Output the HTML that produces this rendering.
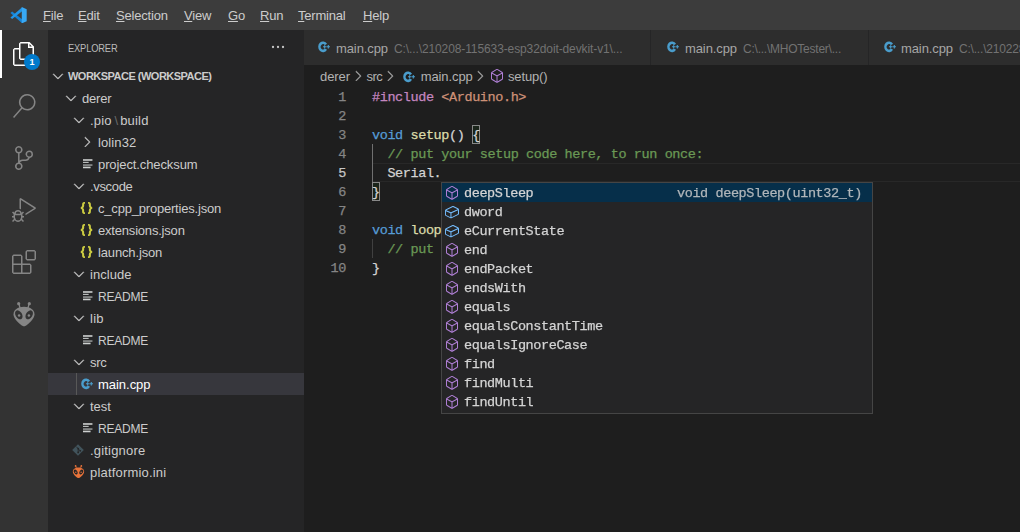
<!DOCTYPE html>
<html><head><meta charset="utf-8">
<style>
*{box-sizing:border-box;margin:0;padding:0}
html,body{width:1020px;height:532px;overflow:hidden;background:#1e1e1e}
body{font-family:"Liberation Sans",sans-serif;font-size:13px;color:#cccccc;position:relative}
.abs{position:absolute}
#menubar{left:0;top:0;width:1020px;height:30px;background:#3c3c3c}
#menubar .mi{position:absolute;top:1px;height:30px;line-height:30px;font-size:13px;color:#cccccc;white-space:nowrap;letter-spacing:-0.2px}
#menubar .mi u{text-decoration:underline;text-underline-offset:1px}
#activity{left:0;top:30px;width:48px;height:502px;background:#333333}
#sidebar{left:48px;top:30px;width:256px;height:502px;background:#252526}
#editor{left:304px;top:30px;width:716px;height:502px;background:#1e1e1e}
#tabs{left:0;top:0;width:716px;height:35px;background:#252526}
.tab{position:absolute;top:0;height:35px;background:#2d2d2d;border-right:1px solid #252526}
.tab .lbl{position:absolute;top:1px;line-height:35px;font-size:13px;color:#a6a6a6;white-space:nowrap;letter-spacing:-0.25px}
.tab .desc{position:absolute;top:2px;line-height:35px;font-size:12px;color:#727272;white-space:nowrap;letter-spacing:-0.25px}
.row{position:absolute;left:0;width:256px;height:22px;line-height:22px;white-space:nowrap;color:#cccccc;font-size:13px}
.row .t{position:absolute;top:0;letter-spacing:-0.25px}
.row svg{position:absolute}
.chev{position:absolute}
.row .t{top:1px}
.code{font-family:"Liberation Mono",monospace;font-size:13.5px;letter-spacing:-0.4px;white-space:pre;padding-top:1px;-webkit-text-stroke:0.25px}
.ln{position:absolute;left:0;width:42px;text-align:right;color:#858585;height:19px;line-height:19px}
.cl{position:absolute;left:68px;height:19px;line-height:19px;color:#d4d4d4}
</style></head><body>
<div id="menubar" class="abs">
<svg class="abs" style="left:9.5px;top:6.8px" width="17" height="16.4" viewBox="0 0 100 100"><path fill="#1683d6" d="M1 36 L11 27 L72 74 L72 99 Z"/><path fill="#2096e8" d="M1 64 L11 73 L72 26 L72 1 Z"/><path fill="#38a9f5" d="M70 0 L100 13 L100 87 L70 100 Z"/></svg>
<span class="mi" style="left:43px"><u>F</u>ile</span>
<span class="mi" style="left:78px"><u>E</u>dit</span>
<span class="mi" style="left:116px"><u>S</u>election</span>
<span class="mi" style="left:184px"><u>V</u>iew</span>
<span class="mi" style="left:228px"><u>G</u>o</span>
<span class="mi" style="left:260px"><u>R</u>un</span>
<span class="mi" style="left:298px"><u>T</u>erminal</span>
<span class="mi" style="left:363px"><u>H</u>elp</span>
</div>
<div id="activity" class="abs">
<div class="abs" style="left:0;top:0;width:2px;height:48px;background:#ffffff"></div>
<svg class="abs" style="left:12px;top:12px" width="24" height="24" viewBox="0 0 24 24"><path fill="#ffffff" d="M17.5 0h-9L7 1.5V6H2.5L1 7.5v15.07L2.5 24h12.07L16 22.57V18h4.7l1.3-1.43V4.5L17.5 0zm0 2.12l2.38 2.38H17.5V2.12zm-3 20.38h-12v-15H7v9.07L8.500 18h6v4.500zm6-6h-12v-15H16V6h4.500v10.500z"/></svg>
<div class="abs" style="left:24px;top:24px;width:16px;height:16px;border-radius:8px;background:#007acc;color:#fff;font-size:9px;font-weight:bold;line-height:16px;text-align:center">1</div>
<svg class="abs" style="left:12px;top:64px" width="24" height="24" viewBox="0 0 24 24"><path fill="#858585" d="M15.25 0a8.25 8.25 0 0 0-6.18 13.72L1 22.88l1.120 1 8.050-9.120A8.251 8.251 0 1 0 15.250.010V0zm0 15a6.750 6.750 0 1 1 0-13.500 6.750 6.750 0 0 1 0 13.500z"/></svg>
<svg class="abs" style="left:12px;top:116px" width="24" height="24" viewBox="0 0 24 24"><path fill="#858585" d="M21.007 8.222A3.738 3.738 0 0 0 15.045 5.200a3.737 3.737 0 0 0 1.156 6.583 2.988 2.988 0 0 1-2.668 1.670h-2.990a4.456 4.456 0 0 0-2.989 1.165V7.400a3.737 3.737 0 1 0-1.494 0v9.117a3.776 3.776 0 1 0 1.816.099 2.990 2.990 0 0 1 2.668-1.667h2.990a4.484 4.484 0 0 0 4.223-3.039 3.736 3.736 0 0 0 3.250-3.687zM4.565 3.738a2.242 2.242 0 1 1 4.484 0 2.242 2.242 0 0 1-4.484 0zm4.484 16.441a2.242 2.242 0 1 1-4.484 0 2.242 2.242 0 0 1 4.484 0zm8.221-9.715a2.242 2.242 0 1 1 0-4.485 2.242 2.242 0 0 1 0 4.485z"/></svg>
<svg class="abs" style="left:12px;top:168px" width="24" height="24" viewBox="0 0 24 24"><path fill="#858585" d="M10.940 13.500l-1.320 1.320a3.730 3.730 0 0 0-7.240 0L1.060 13.500 0 14.560l1.720 1.720-.220.220V18H0v1.500h1.500v.080c.077.489.214.966.410 1.420L0 22.940 1.060 24l1.650-1.650A4.308 4.308 0 0 0 6 24a4.310 4.310 0 0 0 3.290-1.650L10.940 24 12 22.940 10.090 21c.198-.464.336-.951.410-1.450v-.1H12V18h-1.500v-1.500l-.220-.220L12 14.560l-1.060-1.060zM6 13.500a2.250 2.250 0 0 1 2.250 2.250h-4.500A2.250 2.250 0 0 1 6 13.500zm3 6a3.330 3.330 0 0 1-3 3 3.330 3.330 0 0 1-3-3v-2.250h6v2.250zm14.760-9.900v1.260L13.500 17.370V15.600l8.500-5.370L9 2v9.460a5.070 5.070 0 0 0-1.500-.720V.630L8.640 0l15.120 9.600z"/></svg>
<svg class="abs" style="left:12px;top:220px" width="24" height="24" viewBox="0 0 24 24"><path fill="#858585" d="M13.500 1.500L15 0h7.500L24 1.500V9l-1.500 1.500H15L13.500 9V1.500zm1.500 0V9h7.500V1.500H15zM0 15V6l1.500-1.500H9L10.500 6v7.500H18l1.500 1.500v7.500L18 24H1.500L0 22.500V15zm9-1.500V6H1.500v7.500H9zM9 15H1.500v7.500H9V15zm1.500 7.500H18V15h-7.500v7.500z"/></svg>
<svg class="abs" style="left:12px;top:272px" width="24.00" height="25.00" viewBox="0 0 24 25"><path fill="none" stroke="#858585" stroke-width="1.3" d="M6.9 1.6 L8.0 6 M17.1 1.6 L16.0 6"/><circle cx="6.7" cy="1.7" r="1.6" fill="#858585"/><circle cx="17.3" cy="1.7" r="1.6" fill="#858585"/><path fill="#858585" d="M12 4.8 C18.5 4.8 22.5 8 22.5 12.5 C22.5 16.5 16.5 22.6 12.7 24.2 L11.3 24.2 C7.5 22.6 1.5 16.5 1.5 12.5 C1.5 8 5.5 4.8 12 4.8 Z"/><ellipse cx="6.8" cy="12.8" rx="3.2" ry="4.9" transform="rotate(-32 6.8 12.8)" fill="#333333"/><ellipse cx="17.2" cy="12.8" rx="3.2" ry="4.9" transform="rotate(32 17.2 12.8)" fill="#333333"/><circle cx="7.1" cy="13.5" r="1.25" fill="#858585"/><circle cx="16.9" cy="13.5" r="1.25" fill="#858585"/></svg>
</div>
<div id="sidebar" class="abs">
<div class="abs" style="left:20px;top:11px;font-size:11px;line-height:14px;color:#bbbbbb;letter-spacing:-0.2px;transform:scaleX(0.849);transform-origin:0 0;white-space:nowrap">EXPLORER</div>
<svg class="abs" style="left:222px;top:9px" width="16" height="16" viewBox="0 0 16 16"><path fill="#c5c5c5" d="M4.15 8a1.15 1.15 0 1 1-2.3 0 1.15 1.15 0 0 1 2.3 0zm5 0a1.15 1.15 0 1 1-2.3 0 1.15 1.15 0 0 1 2.3 0zm5 0a1.15 1.15 0 1 1-2.3 0 1.15 1.15 0 0 1 2.3 0z"/></svg>
<div class="row" style="top:35px"><svg class="chev" style="left:2px;top:3px" width="16" height="16" viewBox="0 0 16 16"><path fill="#cccccc" stroke="#cccccc" stroke-width="0.35" d="M7.976 10.072l4.357-4.357.62.618L8.284 11h-.618L3 6.333l.619-.618 4.357 4.357z"/></svg><span class="t" style="left:20px;top:0;font-size:11px;font-weight:bold;letter-spacing:-0.514px;color:#cccccc">WORKSPACE (WORKSPACE)</span></div>
<div class="row" style="top:57px"><svg class="chev" style="left:15px;top:3px" width="16" height="16" viewBox="0 0 16 16"><path fill="#cccccc" stroke="#cccccc" stroke-width="0.35" d="M7.976 10.072l4.357-4.357.62.618L8.284 11h-.618L3 6.333l.619-.618 4.357 4.357z"/></svg><span class="t" style="left:34px;letter-spacing:-0.172px;color:#cccccc">derer</span></div>
<div class="row" style="top:79px"><svg class="chev" style="left:23px;top:3px" width="16" height="16" viewBox="0 0 16 16"><path fill="#cccccc" stroke="#cccccc" stroke-width="0.35" d="M7.976 10.072l4.357-4.357.62.618L8.284 11h-.618L3 6.333l.619-.618 4.357 4.357z"/></svg><span class="t" style="left:42px;letter-spacing:0.2px">.pio<span style="color:#6b6b6b;margin:0 1.8px 0 2.8px">\</span>build</span></div>
<div class="row" style="top:101px"><svg class="chev" style="left:31px;top:3px" width="16" height="16" viewBox="0 0 16 16"><path fill="#cccccc" stroke="#cccccc" stroke-width="0.35" d="M10.072 8.024L5.715 3.667l.618-.62L11 7.716v.618L6.333 13l-.618-.619 4.357-4.357z"/></svg><span class="t" style="left:50px;letter-spacing:0.101px;color:#cccccc">lolin32</span></div>
<div class="row" style="top:123px"><svg class="abs" style="left:35.400000000000006px;top:6px" width="10.4" height="10.4" viewBox="0 0 11 11"><g fill="#cdd0cf"><rect x="0" y="0.2" width="10" height="1.7"/><rect x="0" y="3" width="6" height="1.2" opacity="0.9"/><rect x="0" y="5.8" width="10" height="1.2" opacity="0.9"/><rect x="0" y="8.1" width="8" height="1.7"/></g></svg><span class="t" style="left:50px;letter-spacing:-0.104px;color:#cccccc">project.checksum</span></div>
<div class="row" style="top:145px"><svg class="chev" style="left:23px;top:3px" width="16" height="16" viewBox="0 0 16 16"><path fill="#cccccc" stroke="#cccccc" stroke-width="0.35" d="M7.976 10.072l4.357-4.357.62.618L8.284 11h-.618L3 6.333l.619-.618 4.357 4.357z"/></svg><span class="t" style="left:42px;letter-spacing:-0.33px;color:#cccccc">.vscode</span></div>
<div class="row" style="top:167px"><svg class="abs" style="left:31.9px;top:5px" width="13" height="12" viewBox="0 0 12 13" preserveAspectRatio="none"><path fill="none" stroke="#cbcb41" stroke-width="1.9" d="M4.6 0.9 C2.6 0.9 2.9 2.2 2.9 3.9 C2.9 5.6 2.4 6.3 0.8 6.5 C2.4 6.7 2.9 7.4 2.9 9.1 C2.9 10.8 2.6 12.1 4.6 12.1 M7.4 0.9 C9.4 0.9 9.1 2.2 9.1 3.9 C9.1 5.6 9.6 6.3 11.2 6.5 C9.6 6.7 9.1 7.4 9.1 9.1 C9.1 10.8 9.4 12.1 7.4 12.1"/></svg><span class="t" style="left:50px;letter-spacing:-0.2px;color:#cccccc">c_cpp_properties.json</span></div>
<div class="row" style="top:189px"><svg class="abs" style="left:31.9px;top:5px" width="13" height="12" viewBox="0 0 12 13" preserveAspectRatio="none"><path fill="none" stroke="#cbcb41" stroke-width="1.9" d="M4.6 0.9 C2.6 0.9 2.9 2.2 2.9 3.9 C2.9 5.6 2.4 6.3 0.8 6.5 C2.4 6.7 2.9 7.4 2.9 9.1 C2.9 10.8 2.6 12.1 4.6 12.1 M7.4 0.9 C9.4 0.9 9.1 2.2 9.1 3.9 C9.1 5.6 9.6 6.3 11.2 6.5 C9.6 6.7 9.1 7.4 9.1 9.1 C9.1 10.8 9.4 12.1 7.4 12.1"/></svg><span class="t" style="left:50px;letter-spacing:-0.195px;color:#cccccc">extensions.json</span></div>
<div class="row" style="top:211px"><svg class="abs" style="left:31.9px;top:5px" width="13" height="12" viewBox="0 0 12 13" preserveAspectRatio="none"><path fill="none" stroke="#cbcb41" stroke-width="1.9" d="M4.6 0.9 C2.6 0.9 2.9 2.2 2.9 3.9 C2.9 5.6 2.4 6.3 0.8 6.5 C2.4 6.7 2.9 7.4 2.9 9.1 C2.9 10.8 2.6 12.1 4.6 12.1 M7.4 0.9 C9.4 0.9 9.1 2.2 9.1 3.9 C9.1 5.6 9.6 6.3 11.2 6.5 C9.6 6.7 9.1 7.4 9.1 9.1 C9.1 10.8 9.4 12.1 7.4 12.1"/></svg><span class="t" style="left:50px;letter-spacing:-0.144px;color:#cccccc">launch.json</span></div>
<div class="row" style="top:233px"><svg class="chev" style="left:23px;top:3px" width="16" height="16" viewBox="0 0 16 16"><path fill="#cccccc" stroke="#cccccc" stroke-width="0.35" d="M7.976 10.072l4.357-4.357.62.618L8.284 11h-.618L3 6.333l.619-.618 4.357 4.357z"/></svg><span class="t" style="left:42px;letter-spacing:0.042px;color:#cccccc">include</span></div>
<div class="row" style="top:255px"><svg class="abs" style="left:35.400000000000006px;top:6px" width="10.4" height="10.4" viewBox="0 0 11 11"><g fill="#cdd0cf"><rect x="0" y="0.2" width="10" height="1.7"/><rect x="0" y="3" width="6" height="1.2" opacity="0.9"/><rect x="0" y="5.8" width="10" height="1.2" opacity="0.9"/><rect x="0" y="8.1" width="8" height="1.7"/></g></svg><span class="t" style="left:50px;letter-spacing:-0.25px;color:#cccccc;display:inline-block;transform:scaleX(0.924);transform-origin:0 0">README</span></div>
<div class="row" style="top:277px"><svg class="chev" style="left:23px;top:3px" width="16" height="16" viewBox="0 0 16 16"><path fill="#cccccc" stroke="#cccccc" stroke-width="0.35" d="M7.976 10.072l4.357-4.357.62.618L8.284 11h-.618L3 6.333l.619-.618 4.357 4.357z"/></svg><span class="t" style="left:42px;letter-spacing:0.261px;color:#cccccc">lib</span></div>
<div class="row" style="top:299px"><svg class="abs" style="left:35.400000000000006px;top:6px" width="10.4" height="10.4" viewBox="0 0 11 11"><g fill="#cdd0cf"><rect x="0" y="0.2" width="10" height="1.7"/><rect x="0" y="3" width="6" height="1.2" opacity="0.9"/><rect x="0" y="5.8" width="10" height="1.2" opacity="0.9"/><rect x="0" y="8.1" width="8" height="1.7"/></g></svg><span class="t" style="left:50px;letter-spacing:-0.25px;color:#cccccc;display:inline-block;transform:scaleX(0.924);transform-origin:0 0">README</span></div>
<div class="row" style="top:321px"><svg class="chev" style="left:23px;top:3px" width="16" height="16" viewBox="0 0 16 16"><path fill="#cccccc" stroke="#cccccc" stroke-width="0.35" d="M7.976 10.072l4.357-4.357.62.618L8.284 11h-.618L3 6.333l.619-.618 4.357 4.357z"/></svg><span class="t" style="left:42px;letter-spacing:-0.348px;color:#cccccc">src</span></div>
<div class="row" style="top:343px;background:#37373d"><div class="abs" style="left:28px;top:0;width:1px;height:22px;background:#585858"></div><svg class="abs" style="left:33.2px;top:5px" width="14" height="12" viewBox="0 0 14 12"><path fill="none" stroke="#4a9dcc" stroke-width="2.6" d="M7.9 3.5 A3.5 4.1 0 1 0 7.9 8.1"/><path fill="none" stroke="#4a9dcc" stroke-width="1.1" d="M5.0 5.8 H8.3 M6.65 4.15 V7.45 M8.6 5.8 H12.0 M10.3 4.1 V7.5"/></svg><span class="t" style="left:50px;letter-spacing:-0.031px;color:#ffffff">main.cpp</span></div>
<div class="row" style="top:365px"><svg class="chev" style="left:23px;top:3px" width="16" height="16" viewBox="0 0 16 16"><path fill="#cccccc" stroke="#cccccc" stroke-width="0.35" d="M7.976 10.072l4.357-4.357.62.618L8.284 11h-.618L3 6.333l.619-.618 4.357 4.357z"/></svg><span class="t" style="left:42px;letter-spacing:-0.067px;color:#cccccc">test</span></div>
<div class="row" style="top:387px"><svg class="abs" style="left:35.400000000000006px;top:6px" width="10.4" height="10.4" viewBox="0 0 11 11"><g fill="#cdd0cf"><rect x="0" y="0.2" width="10" height="1.7"/><rect x="0" y="3" width="6" height="1.2" opacity="0.9"/><rect x="0" y="5.8" width="10" height="1.2" opacity="0.9"/><rect x="0" y="8.1" width="8" height="1.7"/></g></svg><span class="t" style="left:50px;letter-spacing:-0.25px;color:#cccccc;display:inline-block;transform:scaleX(0.924);transform-origin:0 0">README</span></div>
<div class="row" style="top:409px"><svg class="abs" style="left:24px;top:5px" width="12" height="12" viewBox="0 0 12 12"><path fill="#41535b" d="M6 0.2 L11.8 6 L6 11.8 L0.2 6 Z"/><path fill="none" stroke="#252526" stroke-width="0.9" d="M4.2 2.6 L6.2 4.6 V8.4 M6.2 4.8 L8.2 6.8"/><circle cx="6.2" cy="4.6" r="0.9" fill="#252526"/><circle cx="6.2" cy="8.4" r="0.9" fill="#252526"/><circle cx="8.2" cy="6.8" r="0.9" fill="#252526"/></svg><span class="t" style="left:42px;letter-spacing:0.182px;color:#cccccc">.gitignore</span></div>
<div class="row" style="top:431px"><svg class="abs" style="left:23.700000000000003px;top:4.2px" width="12.96" height="13.50" viewBox="0 0 24 25"><path fill="none" stroke="#e8733a" stroke-width="1.3" d="M6.9 1.6 L8.0 6 M17.1 1.6 L16.0 6"/><circle cx="6.7" cy="1.7" r="1.6" fill="#e8733a"/><circle cx="17.3" cy="1.7" r="1.6" fill="#e8733a"/><path fill="#e8733a" d="M12 4.8 C18.5 4.8 22.5 8 22.5 12.5 C22.5 16.5 16.5 22.6 12.7 24.2 L11.3 24.2 C7.5 22.6 1.5 16.5 1.5 12.5 C1.5 8 5.5 4.8 12 4.8 Z"/><ellipse cx="6.8" cy="12.8" rx="3.2" ry="4.9" transform="rotate(-32 6.8 12.8)" fill="#252526"/><ellipse cx="17.2" cy="12.8" rx="3.2" ry="4.9" transform="rotate(32 17.2 12.8)" fill="#252526"/><circle cx="7.1" cy="13.5" r="1.25" fill="#e8733a"/><circle cx="16.9" cy="13.5" r="1.25" fill="#e8733a"/></svg><span class="t" style="left:42px;letter-spacing:0.185px;color:#cccccc">platformio.ini</span></div>
</div>
<div id="editor" class="abs">
<div id="tabs" class="abs">
<div class="tab" style="left:0px;width:347px"><svg class="abs" style="left:14.300000000000011px;top:10.8px" width="14" height="12" viewBox="0 0 14 12"><path fill="none" stroke="#4a9dcc" stroke-width="2.6" d="M7.9 3.5 A3.5 4.1 0 1 0 7.9 8.1"/><path fill="none" stroke="#4a9dcc" stroke-width="1.1" d="M5.0 5.8 H8.3 M6.65 4.15 V7.45 M8.6 5.8 H12.0 M10.3 4.1 V7.5"/></svg><span class="lbl" style="left:32px;letter-spacing:-0.094px">main.cpp</span><span class="desc" style="left:90px;letter-spacing:-0.108px">C:\...\210208-115633-esp32doit-devkit-v1\...</span></div>
<div class="tab" style="left:347px;width:218px"><svg class="abs" style="left:16.299999999999955px;top:10.8px" width="14" height="12" viewBox="0 0 14 12"><path fill="none" stroke="#4a9dcc" stroke-width="2.6" d="M7.9 3.5 A3.5 4.1 0 1 0 7.9 8.1"/><path fill="none" stroke="#4a9dcc" stroke-width="1.1" d="M5.0 5.8 H8.3 M6.65 4.15 V7.45 M8.6 5.8 H12.0 M10.3 4.1 V7.5"/></svg><span class="lbl" style="left:34px;letter-spacing:-0.094px">main.cpp</span><span class="desc" style="left:92px;letter-spacing:-0.234px">C:\...\MHOTester\...</span></div>
<div class="tab" style="left:565px;width:160px"><svg class="abs" style="left:15.299999999999955px;top:10.8px" width="14" height="12" viewBox="0 0 14 12"><path fill="none" stroke="#4a9dcc" stroke-width="2.6" d="M7.9 3.5 A3.5 4.1 0 1 0 7.9 8.1"/><path fill="none" stroke="#4a9dcc" stroke-width="1.1" d="M5.0 5.8 H8.3 M6.65 4.15 V7.45 M8.6 5.8 H12.0 M10.3 4.1 V7.5"/></svg><span class="lbl" style="left:32px;letter-spacing:-0.094px">main.cpp</span><span class="desc" style="left:90px;letter-spacing:-0.2px">C:\...\210228</span></div>
</div>
<span class="abs" style="left:16px;top:36px;line-height:22px;font-size:13px;color:#b2b2b2;letter-spacing:-0.072px;white-space:nowrap">derer</span>
<svg class="chev" style="left:46px;top:38px" width="16" height="16" viewBox="0 0 16 16"><path fill="#aaaaaa" stroke="#aaaaaa" stroke-width="0.35" d="M10.072 8.024L5.715 3.667l.618-.62L11 7.716v.618L6.333 13l-.618-.619 4.357-4.357z"/></svg>
<span class="abs" style="left:62.5px;top:36px;line-height:22px;font-size:13px;color:#b2b2b2;letter-spacing:-0.515px;white-space:nowrap">src</span>
<svg class="chev" style="left:78.39999999999998px;top:38px" width="16" height="16" viewBox="0 0 16 16"><path fill="#aaaaaa" stroke="#aaaaaa" stroke-width="0.35" d="M10.072 8.024L5.715 3.667l.618-.62L11 7.716v.618L6.333 13l-.618-.619 4.357-4.357z"/></svg>
<svg class="abs" style="left:98.60000000000002px;top:41px" width="14" height="12" viewBox="0 0 14 12"><path fill="none" stroke="#4a9dcc" stroke-width="2.6" d="M7.9 3.5 A3.5 4.1 0 1 0 7.9 8.1"/><path fill="none" stroke="#4a9dcc" stroke-width="1.1" d="M5.0 5.8 H8.3 M6.65 4.15 V7.45 M8.6 5.8 H12.0 M10.3 4.1 V7.5"/></svg>
<span class="abs" style="left:116.69999999999999px;top:36px;line-height:22px;font-size:13px;color:#b2b2b2;letter-spacing:-0.094px;white-space:nowrap">main.cpp</span>
<svg class="chev" style="left:168.39999999999998px;top:38px" width="16" height="16" viewBox="0 0 16 16"><path fill="#aaaaaa" stroke="#aaaaaa" stroke-width="0.35" d="M10.072 8.024L5.715 3.667l.618-.62L11 7.716v.618L6.333 13l-.618-.619 4.357-4.357z"/></svg>
<svg class="abs" style="left:184.8px;top:38px" width="16" height="16" viewBox="0 0 16 16"><path fill="#b180d7" d="M13.51 4l-5-3h-1l-5 3-.49.86v6l.49.85 5 3h1l5-3 .49-.85v-6L13.51 4zm-6 9.56l-4.5-2.7V5.7l4.5 2.45v5.41zM3.27 4.7l4.74-2.84 4.74 2.84-4.74 2.59L3.27 4.7zm9.74 6.16l-4.5 2.7V8.15l4.5-2.45v5.16z"/></svg>
<span class="abs" style="left:204px;top:36px;line-height:22px;font-size:13px;color:#b2b2b2;letter-spacing:-0.138px;white-space:nowrap">setup()</span>
<div class="abs" style="left:68px;top:133px;width:648px;height:19px;border-top:1px solid #282828;border-bottom:1px solid #282828"></div>
<div class="abs" style="left:68px;top:114px;width:1px;height:38px;background:#707070"></div>
<div class="abs" style="left:68px;top:209px;width:1px;height:19px;background:#404040"></div>
<div class="abs" style="left:167.6px;top:95px;width:8.6px;height:19px;border:1px solid #888888;background:rgba(0,100,0,0.1)"></div>
<div class="abs" style="left:67.5px;top:152px;width:8.6px;height:19px;border:1px solid #888888;background:rgba(0,100,0,0.1)"></div>
<div class="ln code" style="top:57px;color:#858585">1</div>
<div class="cl code" style="top:57px"><span style="color:#c586c0">#include</span> <span style="color:#ce9178">&lt;Arduino.h&gt;</span></div>
<div class="ln code" style="top:76px;color:#858585">2</div>
<div class="ln code" style="top:95px;color:#858585">3</div>
<div class="cl code" style="top:95px"><span style="color:#569cd6">void</span> <span style="color:#dcdcaa">setup</span>() {</div>
<div class="ln code" style="top:114px;color:#858585">4</div>
<div class="cl code" style="top:114px">  <span style="color:#6a9955">// put your setup code here, to run once:</span></div>
<div class="ln code" style="top:133px;color:#c6c6c6">5</div>
<div class="cl code" style="top:133px">  Serial.</div>
<div class="ln code" style="top:152px;color:#858585">6</div>
<div class="cl code" style="top:152px">}</div>
<div class="ln code" style="top:171px;color:#858585">7</div>
<div class="ln code" style="top:190px;color:#858585">8</div>
<div class="cl code" style="top:190px"><span style="color:#569cd6">void</span> <span style="color:#dcdcaa">loop</span>() {</div>
<div class="ln code" style="top:209px;color:#858585">9</div>
<div class="cl code" style="top:209px">  <span style="color:#6a9955">// put your main code here, to run repeatedly:</span></div>
<div class="ln code" style="top:228px;color:#858585">10</div>
<div class="cl code" style="top:228px">}</div>
<div class="abs" style="left:137px;top:152px;width:432px;height:232px;background:#252526;border:1px solid #454545;will-change:transform"><div class="abs" style="left:0;top:0px;width:430px;height:19px;background:#062f4a"><svg class="abs" style="left:2px;top:1.5px" width="16" height="16" viewBox="0 0 16 16"><path fill="#b180d7" d="M13.51 4l-5-3h-1l-5 3-.49.86v6l.49.85 5 3h1l5-3 .49-.85v-6L13.51 4zm-6 9.56l-4.5-2.7V5.7l4.5 2.45v5.41zM3.27 4.7l4.74-2.84 4.74 2.84-4.74 2.59L3.27 4.7zm9.74 6.16l-4.5 2.7V8.15l4.5-2.45v5.16z"/></svg><span class="abs code" style="left:22px;top:0;line-height:19px;color:#d4d4d4">deepSleep</span><span class="abs code" style="left:235px;top:0;line-height:19px;color:#b0b6ba">void deepSleep(uint32_t)</span></div><div class="abs" style="left:0;top:19px;width:430px;height:19px"><svg class="abs" style="left:2px;top:1.5px" width="16" height="16" viewBox="0 0 16 16"><path fill="#75beff" d="M14.45 4.5l-5-2.5h-.9l-7 3.5-.55.89v4.5l.55.9 5 2.5h.9l7-3.5.55-.9v-4.5l-.55-.89zm-8 8.64l-4.5-2.25V7.17l4.5 2v3.97zm.5-4.8L2.29 6.23l6.66-3.34 4.67 2.34-6.67 3.11zm7 1.55l-6.5 3.25V9.21l6.5-3v3.68z"/></svg><span class="abs code" style="left:22px;top:0;line-height:19px;color:#d4d4d4">dword</span></div><div class="abs" style="left:0;top:38px;width:430px;height:19px"><svg class="abs" style="left:2px;top:1.5px" width="16" height="16" viewBox="0 0 16 16"><path fill="#75beff" d="M14.45 4.5l-5-2.5h-.9l-7 3.5-.55.89v4.5l.55.9 5 2.5h.9l7-3.5.55-.9v-4.5l-.55-.89zm-8 8.64l-4.5-2.25V7.17l4.5 2v3.97zm.5-4.8L2.29 6.23l6.66-3.34 4.67 2.34-6.67 3.11zm7 1.55l-6.5 3.25V9.21l6.5-3v3.68z"/></svg><span class="abs code" style="left:22px;top:0;line-height:19px;color:#d4d4d4">eCurrentState</span></div><div class="abs" style="left:0;top:57px;width:430px;height:19px"><svg class="abs" style="left:2px;top:1.5px" width="16" height="16" viewBox="0 0 16 16"><path fill="#b180d7" d="M13.51 4l-5-3h-1l-5 3-.49.86v6l.49.85 5 3h1l5-3 .49-.85v-6L13.51 4zm-6 9.56l-4.5-2.7V5.7l4.5 2.45v5.41zM3.27 4.7l4.74-2.84 4.74 2.84-4.74 2.59L3.27 4.7zm9.74 6.16l-4.5 2.7V8.15l4.5-2.45v5.16z"/></svg><span class="abs code" style="left:22px;top:0;line-height:19px;color:#d4d4d4">end</span></div><div class="abs" style="left:0;top:76px;width:430px;height:19px"><svg class="abs" style="left:2px;top:1.5px" width="16" height="16" viewBox="0 0 16 16"><path fill="#b180d7" d="M13.51 4l-5-3h-1l-5 3-.49.86v6l.49.85 5 3h1l5-3 .49-.85v-6L13.51 4zm-6 9.56l-4.5-2.7V5.7l4.5 2.45v5.41zM3.27 4.7l4.74-2.84 4.74 2.84-4.74 2.59L3.27 4.7zm9.74 6.16l-4.5 2.7V8.15l4.5-2.45v5.16z"/></svg><span class="abs code" style="left:22px;top:0;line-height:19px;color:#d4d4d4">endPacket</span></div><div class="abs" style="left:0;top:95px;width:430px;height:19px"><svg class="abs" style="left:2px;top:1.5px" width="16" height="16" viewBox="0 0 16 16"><path fill="#b180d7" d="M13.51 4l-5-3h-1l-5 3-.49.86v6l.49.85 5 3h1l5-3 .49-.85v-6L13.51 4zm-6 9.56l-4.5-2.7V5.7l4.5 2.45v5.41zM3.27 4.7l4.74-2.84 4.74 2.84-4.74 2.59L3.27 4.7zm9.74 6.16l-4.5 2.7V8.15l4.5-2.45v5.16z"/></svg><span class="abs code" style="left:22px;top:0;line-height:19px;color:#d4d4d4">endsWith</span></div><div class="abs" style="left:0;top:114px;width:430px;height:19px"><svg class="abs" style="left:2px;top:1.5px" width="16" height="16" viewBox="0 0 16 16"><path fill="#b180d7" d="M13.51 4l-5-3h-1l-5 3-.49.86v6l.49.85 5 3h1l5-3 .49-.85v-6L13.51 4zm-6 9.56l-4.5-2.7V5.7l4.5 2.45v5.41zM3.27 4.7l4.74-2.84 4.74 2.84-4.74 2.59L3.27 4.7zm9.74 6.16l-4.5 2.7V8.15l4.5-2.45v5.16z"/></svg><span class="abs code" style="left:22px;top:0;line-height:19px;color:#d4d4d4">equals</span></div><div class="abs" style="left:0;top:133px;width:430px;height:19px"><svg class="abs" style="left:2px;top:1.5px" width="16" height="16" viewBox="0 0 16 16"><path fill="#b180d7" d="M13.51 4l-5-3h-1l-5 3-.49.86v6l.49.85 5 3h1l5-3 .49-.85v-6L13.51 4zm-6 9.56l-4.5-2.7V5.7l4.5 2.45v5.41zM3.27 4.7l4.74-2.84 4.74 2.84-4.74 2.59L3.27 4.7zm9.74 6.16l-4.5 2.7V8.15l4.5-2.45v5.16z"/></svg><span class="abs code" style="left:22px;top:0;line-height:19px;color:#d4d4d4">equalsConstantTime</span></div><div class="abs" style="left:0;top:152px;width:430px;height:19px"><svg class="abs" style="left:2px;top:1.5px" width="16" height="16" viewBox="0 0 16 16"><path fill="#b180d7" d="M13.51 4l-5-3h-1l-5 3-.49.86v6l.49.85 5 3h1l5-3 .49-.85v-6L13.51 4zm-6 9.56l-4.5-2.7V5.7l4.5 2.45v5.41zM3.27 4.7l4.74-2.84 4.74 2.84-4.74 2.59L3.27 4.7zm9.74 6.16l-4.5 2.7V8.15l4.5-2.45v5.16z"/></svg><span class="abs code" style="left:22px;top:0;line-height:19px;color:#d4d4d4">equalsIgnoreCase</span></div><div class="abs" style="left:0;top:171px;width:430px;height:19px"><svg class="abs" style="left:2px;top:1.5px" width="16" height="16" viewBox="0 0 16 16"><path fill="#b180d7" d="M13.51 4l-5-3h-1l-5 3-.49.86v6l.49.85 5 3h1l5-3 .49-.85v-6L13.51 4zm-6 9.56l-4.5-2.7V5.7l4.5 2.45v5.41zM3.27 4.7l4.74-2.84 4.74 2.84-4.74 2.59L3.27 4.7zm9.74 6.16l-4.5 2.7V8.15l4.5-2.45v5.16z"/></svg><span class="abs code" style="left:22px;top:0;line-height:19px;color:#d4d4d4">find</span></div><div class="abs" style="left:0;top:190px;width:430px;height:19px"><svg class="abs" style="left:2px;top:1.5px" width="16" height="16" viewBox="0 0 16 16"><path fill="#b180d7" d="M13.51 4l-5-3h-1l-5 3-.49.86v6l.49.85 5 3h1l5-3 .49-.85v-6L13.51 4zm-6 9.56l-4.5-2.7V5.7l4.5 2.45v5.41zM3.27 4.7l4.74-2.84 4.74 2.84-4.74 2.59L3.27 4.7zm9.74 6.16l-4.5 2.7V8.15l4.5-2.45v5.16z"/></svg><span class="abs code" style="left:22px;top:0;line-height:19px;color:#d4d4d4">findMulti</span></div><div class="abs" style="left:0;top:209px;width:430px;height:19px"><svg class="abs" style="left:2px;top:1.5px" width="16" height="16" viewBox="0 0 16 16"><path fill="#b180d7" d="M13.51 4l-5-3h-1l-5 3-.49.86v6l.49.85 5 3h1l5-3 .49-.85v-6L13.51 4zm-6 9.56l-4.5-2.7V5.7l4.5 2.45v5.41zM3.27 4.7l4.74-2.84 4.74 2.84-4.74 2.59L3.27 4.7zm9.74 6.16l-4.5 2.7V8.15l4.5-2.45v5.16z"/></svg><span class="abs code" style="left:22px;top:0;line-height:19px;color:#d4d4d4">findUntil</span></div></div>
</div>
</body></html>
